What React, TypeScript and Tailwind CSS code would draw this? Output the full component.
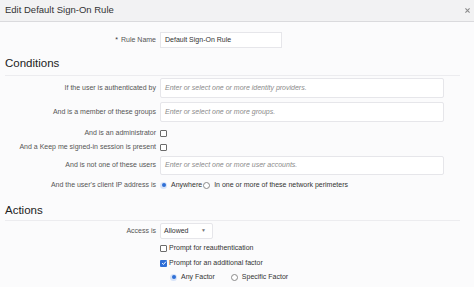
const font = "font-['Liberation_Sans','Helvetica',sans-serif]";

function Label({ children }: { children: React.ReactNode }) {
  return (
    <div className="w-[157px] shrink-0 text-right pr-[1px] text-[7px] text-[#555]">
      {children}
    </div>
  );
}

function Row({
  label,
  height,
  className = "",
  children,
}: {
  label?: React.ReactNode;
  height: string;
  className?: string;
  children: React.ReactNode;
}) {
  return (
    <div className={`flex items-center ${height} ${className}`}>
      <Label>{label}</Label>
      <div className="ml-[3px] flex h-full items-center">{children}</div>
    </div>
  );
}

function TextInput({ placeholder, h }: { placeholder: string; h: string }) {
  return (
    <div
      className={`flex w-[284px] ${h} items-center rounded-[2px] border border-[#e6e6ea] bg-white px-[4px] text-[7px] italic text-[#8a8a8a]`}
    >
      {placeholder}
    </div>
  );
}

function Checkbox({ checked = false }: { checked?: boolean }) {
  return checked ? (
    <span className="flex h-[7px] w-[7px] shrink-0 items-center justify-center rounded-[1px] bg-[#2f6fd6]">
      <svg viewBox="0 0 8 8" className="h-[6px] w-[6px]">
        <path d="M1.5 4.2 L3.3 5.9 L6.6 2.2" fill="none" stroke="white" strokeWidth="1.3" />
      </svg>
    </span>
  ) : (
    <span className="block h-[7px] w-[7px] shrink-0 rounded-[1px] border border-[#6b6b6b] bg-white" />
  );
}

function Radio({ checked = false, className = "" }: { checked?: boolean; className?: string }) {
  return checked ? (
    <span
      className={`flex h-[7px] w-[7px] shrink-0 items-center justify-center rounded-full bg-[#d7e3f8] ${className}`}
    >
      <span className="block h-[4px] w-[4px] rounded-full bg-[#2f6fd6]" />
    </span>
  ) : (
    <span
      className={`block h-[7px] w-[7px] shrink-0 rounded-full border border-[#8a8a8a] bg-white ${className}`}
    />
  );
}

function Heading({ children, className = "" }: { children: React.ReactNode; className?: string }) {
  return (
    <div className={`h-[14px] pl-[5px] text-[11.5px] leading-[14px] text-[#222] ${className}`}>
      {children}
    </div>
  );
}

export default function App() {
  return (
    <div className={`h-[287px] w-[474px] overflow-hidden bg-[#fbfbfc] ${font}`}>
      <div className="flex h-[22px] items-center justify-between border-b border-[#dadadd] bg-[#f2f2f3] pl-[5px] pr-[4px]">
        <span className="text-[9.5px] text-[#333]">Edit Default Sign-On Rule</span>
        <svg viewBox="0 0 6 6" className="h-[5px] w-[5px]">
          <path d="M0.5 0.5 L5.5 5.5 M5.5 0.5 L0.5 5.5" stroke="#8a8a8a" strokeWidth="1.3" />
        </svg>
      </div>

      <div className="pt-[10px]">
        <Row
          height="h-[16px]"
          label={
            <span>
              <span className="mr-[3px] text-[#333]">*</span>Rule Name
            </span>
          }
        >
          <div className="flex h-[16px] w-[122px] items-center border border-[#e6e6ea] bg-white px-[4px] text-[7px] text-[#333]">
            Default Sign-On Rule
          </div>
        </Row>
      </div>

      <Heading className="mt-[8px] mb-[5px]">Conditions</Heading>
      <div className="ml-[5px] w-[455px] border-t border-[#ececef] pt-[2px]">
        <div className="-ml-[5px]">
          <Row height="h-[20px]" label="If the user is authenticated by">
            <TextInput h="h-[20px]" placeholder="Enter or select one or more identity providers." />
          </Row>
          <Row height="h-[20px]" className="mt-[4px]" label="And is a member of these groups">
            <TextInput h="h-[20px]" placeholder="Enter or select one or more groups." />
          </Row>
          <Row height="h-[14px]" className="mt-[4px]" label="And is an administrator">
            <Checkbox />
          </Row>
          <Row height="h-[14px]" label="And a Keep me signed-in session is present">
            <Checkbox />
          </Row>
          <Row height="h-[19px]" className="mt-[2px]" label="And is not one of these users">
            <TextInput h="h-[19px]" placeholder="Enter or select one or more user accounts." />
          </Row>
          <Row height="h-[14px]" className="mt-[3px]" label="And the user's client IP address is">
            <div className="flex items-center text-[7px] text-[#333]">
              <Radio checked />
              <span className="ml-[4px]">Anywhere</span>
              <Radio className="ml-[1px]" />
              <span className="ml-[4px]">In one or more of these network perimeters</span>
            </div>
          </Row>
        </div>
      </div>

      <Heading className="mt-[11px] mb-[3px]">Actions</Heading>
      <div className="ml-[5px] w-[455px] border-t border-[#ececef] pt-[2px]">
        <div className="-ml-[5px]">
          <Row height="h-[16px]" label="Access is">
            <div className="flex h-[16px] w-[53px] items-center justify-between rounded-[2px] border border-[#e6e6ea] bg-white pl-[3px] pr-[6px] text-[7px] text-[#333]">
              <span>Allowed</span>
              <span className="text-[5px] text-[#777]">▼</span>
            </div>
          </Row>
          <Row height="h-[14px]" className="mt-[2px]">
            <div className="flex items-center text-[7px] text-[#333]">
              <Checkbox />
              <span className="ml-[2px]">Prompt for reauthentication</span>
            </div>
          </Row>
          <Row height="h-[14px]" className="mt-[1px]">
            <div className="flex items-center text-[7px] text-[#333]">
              <Checkbox checked />
              <span className="ml-[2px]">Prompt for an additional factor</span>
            </div>
          </Row>
          <Row height="h-[14px]">
            <div className="ml-[10px] flex items-center text-[7px] text-[#333]">
              <Radio checked />
              <span className="ml-[4px]">Any Factor</span>
              <Radio className="ml-[16px]" />
              <span className="ml-[4px]">Specific Factor</span>
            </div>
          </Row>
        </div>
      </div>
    </div>
  );
}
